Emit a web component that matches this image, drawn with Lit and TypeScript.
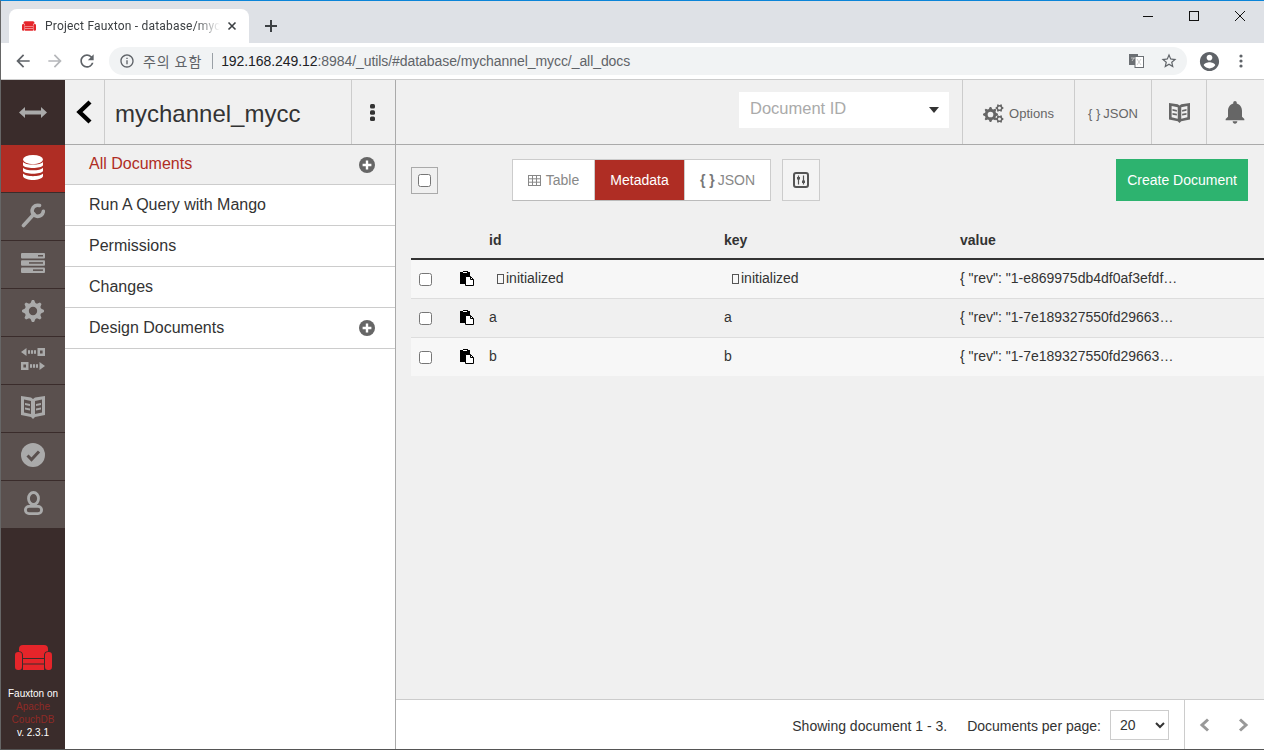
import { LitElement, html, css } from "lit";
import { customElement } from "lit/decorators.js";

const gear = (cx: number, cy: number, r: number, teeth: number) => {
  const pts: string[] = [];
  const n = teeth * 4;
  for (let i = 0; i < n; i++) {
    const a = ((i - 0.5) / n) * Math.PI * 2;
    const rad = i % 4 < 2 ? r : r * 0.76;
    pts.push(`${(cx + Math.cos(a) * rad).toFixed(2)} ${(cy + Math.sin(a) * rad).toFixed(2)}`);
  }
  const hole = r * 0.38;
  return `M${pts.join("L")}Z M${cx - hole} ${cy}a${hole} ${hole} 0 1 0 ${hole * 2} 0a${hole} ${hole} 0 1 0 ${-hole * 2} 0Z`;
};

const mat = (d: string, size: number, color = "#5f6368") =>
  html`<svg width=${size} height=${size} viewBox="0 0 24 24" fill=${color}><path d=${d}></path></svg>`;

const ARROW = "M20 11H7.83l5.59-5.59L12 4l-8 8 8 8 1.41-1.41L7.83 13H20v-2z";

const couch = (w: number, h: number, c = "#e5252a") => html`<svg width=${w} height=${h} viewBox="0 0 37 25">
  <path fill=${c} d="M8 0h21a4 4 0 0 1 4 4v2.2a4 4 0 0 0-4 3.8v3H8v-3a4 4 0 0 0-4-3.8V4a4 4 0 0 1 4-4z"></path>
  <rect fill=${c} x="0" y="7" width="7" height="18" rx="3.2"></rect>
  <rect fill=${c} x="30" y="7" width="7" height="18" rx="3.2"></rect>
  <rect fill=${c} x="8" y="14" width="21" height="4.5"></rect>
  <rect fill=${c} x="8" y="19.5" width="21" height="5.5"></rect>
</svg>`;

const book = (w: number, h: number, c: string) => html`<svg width=${w} height=${h} viewBox="0 0 24 24" fill=${c}>
  <path fill-rule="evenodd" d="M0 1l10 1.5L12 4l2-1.5L24 1v19l-10 2-2 2-2-2-10-2zM3 4.5v13l7 1.5V6zM21 4.5l-7 1.5v13l7-1.5z"></path>
  <path d="M4 8l5 1v2L4 10zM4 12.5l5 1v2l-5-1zM20 8l-5 1v2l5-1zM20 12.5l-5 1v2l5-1z"></path>
</svg>`;

const NAV_BG = "#5a504e";

const navIcons = [
  html`<svg width="20" height="25" viewBox="0 0 20 25" fill="#fff">
    <ellipse cx="10" cy="4.6" rx="10" ry="4.6"></ellipse>
    <path d="M0 7c2 3.4 18 3.4 20 0v3.2c-2 3.6-18 3.6-20 0z"></path>
    <path d="M0 12.8c2 3.4 18 3.4 20 0V16c-2 3.6-18 3.6-20 0z"></path>
    <path d="M0 18.6c2 3.4 18 3.4 20 0v2.6c-2 5-18 5-20 0z"></path>
  </svg>`,
  html`<svg width="24" height="25" viewBox="0 0 24 25" fill="none" stroke="#aaa" stroke-linecap="round">
    <path stroke-width="3.6" d="M2.5 22.5L13 11"></path>
    <path stroke-width="3.6" d="M18.5 2.5A5.6 5.6 0 1 0 22.3 8.4"></path>
  </svg>`,
  html`<svg width="24" height="20" viewBox="0 0 24 20">
    <rect width="24" height="5.6" rx="1" fill="#aaa"></rect>
    <rect y="7.2" width="24" height="5.6" rx="1" fill="#aaa"></rect>
    <rect y="14.4" width="24" height="5.6" rx="1" fill="#aaa"></rect>
    <rect x="17" y="2" width="5" height="1.5" fill=${NAV_BG}></rect>
    <rect x="8" y="9.2" width="14" height="1.5" fill=${NAV_BG}></rect>
    <rect x="12" y="16.4" width="10" height="1.5" fill=${NAV_BG}></rect>
  </svg>`,
  html`<svg width="22" height="22" viewBox="0 0 22 22" fill="#aaa"><path fill-rule="evenodd" d=${gear(11, 11, 11, 8)}></path></svg>`,
  html`<svg width="24" height="22" viewBox="0 0 24 22" fill="#aaa">
    <path d="M0 4l5.5-4v8z"></path>
    <rect x="7" y="2.2" width="2.1" height="3.6"></rect><rect x="10" y="2.2" width="2.1" height="3.6"></rect><rect x="13" y="2.2" width="2" height="3.6"></rect>
    <path fill-rule="evenodd" d="M16.5 0H24v8h-7.5zM19 2.6v2.8h2.6V2.6z"></path>
    <path d="M24 18l-5.5-4v8z"></path>
    <rect x="14.9" y="16.2" width="2.1" height="3.6"></rect><rect x="11.9" y="16.2" width="2.1" height="3.6"></rect><rect x="9" y="16.2" width="2" height="3.6"></rect>
    <path fill-rule="evenodd" d="M0 14h7.5v8H0zM2.4 16.6v2.8H5v-2.8z"></path>
  </svg>`,
  book(24, 24, "#aaa"),
  html`<svg width="24" height="24" viewBox="0 0 24 24">
    <circle cx="12" cy="12" r="12" fill="#aaa"></circle>
    <path d="M6.5 12.5l4 4 7.5-8" fill="none" stroke=${NAV_BG} stroke-width="3"></path>
  </svg>`,
  html`<svg width="19" height="24" viewBox="0 0 19 24" fill="none" stroke="#aaa" stroke-width="2.8">
    <ellipse cx="9.5" cy="7.5" rx="5" ry="6"></ellipse>
    <rect x="1.4" y="15.4" width="16.2" height="7.2" rx="3.6"></rect>
  </svg>`,
];

const navLabels = ["Databases", "Setup", "Active Tasks", "Configuration", "Replication", "Documentation", "Verify", "Admin"];

const plus = html`<svg class="plus" width="16" height="16" viewBox="0 0 16 16">
  <circle cx="8" cy="8" r="8" fill="#666"></circle>
  <path d="M8 3.6v8.8M3.6 8h8.8" stroke="#fff" stroke-width="2.4"></path>
</svg>`;

const copyIcon = html`<svg width="15" height="15" viewBox="0 0 15 15">
  <path d="M0 1h3V0h5v1h2v12H0z" fill="#000"></path>
  <rect x="3" y="1" width="4" height="1" fill="#fff"></rect>
  <path d="M5.5 5.5h5l3 3v6h-8z" fill="#fff" stroke="#000" stroke-width="1"></path>
  <path d="M10.5 5.5v3h3" fill="none" stroke="#000"></path>
</svg>`;

const rows = [
  { id: "initialized", tofu: true, value: '{ "rev": "1-e869975db4df0af3efdf6e02a4b1c7d3" }' },
  { id: "a", tofu: false, value: '{ "rev": "1-7e189327550fd29663bd7f0e2c41a8d6" }' },
  { id: "b", tofu: false, value: '{ "rev": "1-7e189327550fd29663bd7f0e2c41a8d6" }' },
];

@customElement("app-root")
export class AppRoot extends LitElement {
  static styles = css`
    :host {
      display: flex;
      flex-direction: column;
      width: 1264px;
      height: 750px;
      box-sizing: border-box;
      border-top: 1px solid #0a84d8;
      border-left: 1px solid #666;
      border-bottom: 1px solid #555;
      font-family: "Liberation Sans", Arial, sans-serif;
      color: #333;
      overflow: hidden;
      background: #fff;
    }
    * { box-sizing: border-box; }
    svg { display: block; flex: none; }

    .titlebar { height: 42px; background: #dee1e6; display: flex; flex: none; padding-left: 8px; }
    .tab {
      width: 240px; height: 34px; margin-top: 8px; background: #fff; border-radius: 8px 8px 0 0;
      display: flex; align-items: center; padding-left: 13px; position: relative;
    }
    .tab-title {
      margin-left: 9px; width: 175px; white-space: nowrap; overflow: hidden;
      font: 12px Roboto, sans-serif; letter-spacing: 0.2px; color: #3c4043;
      -webkit-mask-image: linear-gradient(to right, #000 150px, transparent 175px);
      mask-image: linear-gradient(to right, #000 150px, transparent 175px);
    }
    .tab-close { margin-left: 7px; }
    .newtab { margin: 18px 0 0 15px; }
    .winctl { margin-left: auto; display: flex; height: 30px; padding-right: 1px; }
    .winbtn { width: 46px; display: flex; align-items: center; justify-content: center; }

    .toolbar {
      height: 37px; flex: none; background: #fff; border-bottom: 1px solid #ccc;
      display: flex; align-items: flex-start; padding-top: 4px;
    }
    .nav-btn { width: 32px; height: 28px; display: flex; align-items: center; justify-content: center; }
    .back-btn { margin-left: 6px; }
    .flip { transform: scaleX(-1); }
    .omni {
      margin-left: 6px; width: 1078px; height: 28px; border-radius: 14px; background: #f1f3f4;
      display: flex; align-items: center; padding-left: 10px; white-space: nowrap;
    }
    .warn { margin-left: 8px; font: 14px "Noto Sans CJK KR", sans-serif; letter-spacing: 0.9px; color: #5f6368; line-height: 20px; }
    .sep { width: 1px; height: 16px; background: #9aa0a6; margin: 0 8px 0 10px; }
    .url { font-size: 14px; color: #5f6368; letter-spacing: -0.07px; }
    .url b { font-weight: 400; color: #202124; }
    .omni-right { margin-left: auto; display: flex; align-items: center; gap: 16px; padding-right: 9px; }
    .tool-right { display: flex; align-items: center; margin-left: 11px; height: 28px; gap: 18px; }

    .app { flex: 1; display: flex; min-height: 0; }
    .nav { width: 64px; flex: none; background: #3a2c2b; display: flex; flex-direction: column; }
    .nav-top { height: 65px; display: flex; align-items: center; justify-content: center; padding-bottom: 1px; }
    .nav-item {
      height: 48px; background: #5a504e; border-bottom: 1px solid #3a2c2b; padding-bottom: 3px;
      display: flex; align-items: center; justify-content: center;
    }
    .nav-item.active { background: #af2d24; }
    .nav-foot { margin-top: auto; display: flex; flex-direction: column; align-items: center; padding-bottom: 10px; }
    .foot-logo { margin-bottom: 17px; }
    .foot-line { font-size: 10px; line-height: 13px; color: #fff; white-space: nowrap; }
    .foot-line.red { color: #8f2a26; }

    .content { flex: 1; min-width: 0; display: flex; flex-direction: column; }
    .header { height: 65px; flex: none; background: #f0f0f0; border-bottom: 1px solid #aaa; display: flex; }
    .hd-left { width: 331px; flex: none; display: flex; border-right: 1px solid #aaa; }
    .hd-back { width: 40px; flex: none; border-right: 1px solid #ccc; display: flex; align-items: center; justify-content: center; padding-right: 2px; }
    .hd-title { flex: 1; padding-left: 10px; font-size: 24px; line-height: 68px; color: #333; white-space: nowrap; }
    .hd-menu { width: 44px; flex: none; border-left: 1px solid #ccc; display: flex; align-items: center; justify-content: center; padding-right: 2px; }
    .hd-right { flex: 1; display: flex; align-items: stretch; justify-content: flex-end; }
    .doc-box {
      width: 210px; height: 36px; margin: 12px 13px 0 0; background: #fff; display: flex; align-items: center; padding: 0 10px 0 0;
    }
    .doc-input {
      flex: 1; min-width: 0; height: 100%; border: 0; outline: 0; background: transparent; padding: 0 0 4px 11px;
      font: 16.5px "Liberation Sans", Arial, sans-serif;
    }
    .doc-input::placeholder { color: #aaa; opacity: 1; }
    .hd-btn {
      border-left: 1px solid #ccc; display: flex; align-items: center; justify-content: center;
      font-size: 13px; color: #666; gap: 5px; padding-top: 2px;
    }
    .w-opt { width: 112px; }
    .w-json { width: 77px; gap: 3px; }
    .w-book { width: 55px; padding-top: 0; }
    .w-bell { width: 58px; padding: 0 2px 0 0; }

    .body { flex: 1; min-height: 0; display: flex; }
    .side { width: 331px; flex: none; background: #fff; border-right: 1px solid #aaa; }
    .side-item {
      height: 41px; border-bottom: 1px solid #ccc; display: flex; align-items: center; justify-content: space-between;
      padding: 0 20px 1px 24px; font-size: 16px; color: #333;
    }
    .side-item.active { background: #f0f0f0; color: #af2d24; height: 40px; }
    .side-item.active .plus { margin-top: 2px; }

    .main { flex: 1; min-width: 0; display: flex; flex-direction: column; background: #f0f0f0; }
    .scroll { flex: 1; min-height: 0; padding: 14px 0 0 15px; }
    .controls { display: flex; align-items: flex-start; height: 42px; padding-right: 16px; }
    .check-all {
      width: 27px; height: 27px; margin-top: 8px; border: 1px solid #aaa;
      display: flex; align-items: center; justify-content: center;
    }
    input[type="checkbox"] { margin: 0; width: 13px; height: 13px; display: block; }
    .seg { margin-left: 74px; display: flex; height: 42px; border: 1px solid #ccc; border-bottom-color: #bbb; background: #fff; }
    .seg-btn { display: flex; align-items: center; justify-content: center; font-size: 14px; color: #888; gap: 5px; }
    .seg-table { width: 82px; border-right: 1px solid #ccc; }
    .seg-meta { width: 89px; background: #af2d24; color: #fff; }
    .seg-json { width: 86px; border-left: 1px solid #ccc; gap: 3px; }
    .seg-braces { font-weight: 700; color: #777; }
    .layout-btn {
      margin-left: 11px; width: 38px; height: 42px; border: 1px solid #ccc; background: #f4f4f4;
      display: flex; align-items: center; justify-content: center;
    }
    .create {
      margin-left: auto; width: 132px; height: 42px; background: #2db36f; color: #fff; font-size: 14px;
      display: flex; align-items: center; justify-content: center;
    }
    .table { margin-top: 21px; }
    .t-row { display: grid; grid-template-columns: 49px 29px 235px 236px 1fr; align-items: center; font-size: 14px; color: #333; }
    .t-head { height: 38px; border-bottom: 2px solid #333; font-weight: 700; padding-bottom: 1px; }
    .t-body { height: 39px; border-bottom: 1px solid #ddd; padding-bottom: 3px; background: #f0f0f0; }
    .t-body:nth-child(odd) { background: #f7f7f7; }
    .t-body:last-child { border-bottom: 0; height: 38px; }
    .t-check { padding-left: 8px; padding-top: 4px; }
    .t-copy { padding-top: 2px; }
    .t-value { width: 219px; overflow: hidden; text-overflow: ellipsis; white-space: nowrap; }
    .tofu {
      display: inline-block; width: 7px; height: 10px; border: 1px solid #555; margin: 0 2px 0 8px; vertical-align: -1px;
    }

    .footer {
      height: 50px; flex: none; background: #fff; border-top: 1px solid #ccc; display: flex; align-items: center;
      justify-content: flex-end; font-size: 14px; color: #333;
    }
    .foot-text { padding-top: 2px; }
    .per-page { margin-left: 20px; }
    .per-select {
      margin-left: 9px; width: 59px; height: 30px; background: #fff; border: 1px solid #ccc; border-radius: 0;
      font: 14px "Liberation Sans", Arial, sans-serif; color: #333; padding-left: 5px; outline: 0;
    }
    .pager {
      width: 80px; height: 100%; margin-left: 15px; border-left: 1px solid #ccc; display: flex; align-items: center;
      justify-content: space-between; padding: 0 15px 0 14px;
    }
  `;

  render() {
    return html`
      <div class="titlebar">
        <div class="tab">
          ${couch(14, 10)}
          <div class="tab-title">Project Fauxton - database/mychannel_mycc</div>
          <svg class="tab-close" width="10" height="10" viewBox="0 0 10 10"><path d="M1.5 1.5l7 7M8.5 1.5l-7 7" stroke="#3c4043" stroke-width="1.6"></path></svg>
        </div>
        <svg class="newtab" width="14" height="14" viewBox="0 0 14 14"><path d="M7 1v12M1 7h12" stroke="#3c4043" stroke-width="2"></path></svg>
        <div class="winctl">
          <div class="winbtn"><svg width="10" height="10" viewBox="0 0 10 10"><path d="M0 5.5h10" stroke="#111"></path></svg></div>
          <div class="winbtn"><svg width="10" height="10" viewBox="0 0 10 10"><rect x=".5" y=".5" width="9" height="9" fill="none" stroke="#111"></rect></svg></div>
          <div class="winbtn"><svg width="10" height="10" viewBox="0 0 10 10"><path d="M0 0l10 10M10 0L0 10" stroke="#111"></path></svg></div>
        </div>
      </div>

      <div class="toolbar">
        <div class="nav-btn back-btn">${mat(ARROW, 20)}</div>
        <div class="nav-btn flip">${mat(ARROW, 20, "#b5b7ba")}</div>
        <div class="nav-btn">${mat("M17.65 6.35A7.958 7.958 0 0 0 12 4c-4.42 0-7.99 3.58-7.99 8s3.57 8 7.99 8c3.73 0 6.84-2.55 7.73-6h-2.08A5.99 5.99 0 0 1 12 18c-3.31 0-6-2.69-6-6s2.69-6 6-6c1.66 0 3.14.69 4.22 1.78L13 11h7V4l-2.35 2.35z", 20)}</div>
        <div class="omni">
          ${mat("M11 7h2v2h-2zm0 4h2v6h-2zm1-9C6.48 2 2 6.48 2 12s4.48 10 10 10 10-4.48 10-10S17.52 2 12 2zm0 18c-4.41 0-8-3.59-8-8s3.59-8 8-8 8 3.59 8 8-3.59 8-8 8z", 16)}
          <span class="warn">주의 요함</span><span class="sep"></span>
          <span class="url"><b>192.168.249.12</b>:8984/_utils/#database/mychannel_mycc/_all_docs</span>
          <div class="omni-right">
            <svg width="15" height="14" viewBox="0 0 15 14">
              <rect x="0" y="0" width="9" height="11" fill="#6b6f73"></rect>
              <rect x="6" y="2.5" width="8.5" height="11" fill="#fff" stroke="#6b6f73"></rect>
              <path d="M2 4h4M3 7l2-3M8 5l4 6M12 5l-4 6" stroke="#ccc" stroke-width=".9" fill="none"></path>
            </svg>
            ${mat("M22 9.24l-7.19-.62L12 2 9.19 8.63 2 9.24l5.46 4.73L5.82 21 12 17.27 18.18 21l-1.63-7.03L22 9.24zM12 15.4l-3.76 2.27 1-4.28-3.32-2.88 4.38-.38L12 6.1l1.71 4.04 4.38.38-3.32 2.88 1 4.28L12 15.4z", 18)}
          </div>
        </div>
        <div class="tool-right">
          ${mat("M12 2C6.48 2 2 6.48 2 12s4.48 10 10 10 10-4.48 10-10S17.52 2 12 2zm0 3c1.66 0 3 1.34 3 3s-1.34 3-3 3-3-1.34-3-3 1.34-3 3-3zm0 14.2c-2.5 0-4.71-1.28-6-3.22.03-1.99 4-3.08 6-3.08 1.99 0 5.97 1.09 6 3.08-1.29 1.94-3.5 3.22-6 3.22z", 23)}
          <svg width="4" height="14" viewBox="0 0 4 14" fill="#5f6368"><circle cx="2" cy="2" r="1.6"></circle><circle cx="2" cy="7" r="1.6"></circle><circle cx="2" cy="12" r="1.6"></circle></svg>
        </div>
      </div>

      <div class="app">
        <nav class="nav">
          <div class="nav-top">
            <svg width="28" height="11" viewBox="0 0 28 11" fill="#aaa"><path d="M0 5.5L6 0v3.5h16V0l6 5.5-6 5.5V7.5H6V11z"></path></svg>
          </div>
          ${navIcons.map((ic, i) => html`<div class="nav-item ${i === 0 ? "active" : ""}" title=${navLabels[i]}>${ic}</div>`)}
          <div class="nav-foot">
            <div class="foot-logo">${couch(37, 25)}</div>
            <div class="foot-line">Fauxton on</div>
            <div class="foot-line red">Apache</div>
            <div class="foot-line red">CouchDB</div>
            <div class="foot-line">v. 2.3.1</div>
          </div>
        </nav>

        <div class="content">
          <header class="header">
            <div class="hd-left">
              <div class="hd-back"><svg width="16" height="24" viewBox="0 0 16 24"><path d="M14 2L3.5 12 14 22" fill="none" stroke="#000" stroke-width="4.4"></path></svg></div>
              <div class="hd-title">mychannel_mycc</div>
              <div class="hd-menu"><svg width="5" height="17" viewBox="0 0 5 17" fill="#333"><rect width="5" height="4.4" rx="1.5"></rect><rect y="6.3" width="5" height="4.4" rx="1.5"></rect><rect y="12.6" width="5" height="4.4" rx="1.5"></rect></svg></div>
            </div>
            <div class="hd-right">
              <div class="doc-box">
                <input class="doc-input" placeholder="Document ID" />
                <svg width="10" height="6" viewBox="0 0 10 6" fill="#333"><path d="M0 0h10L5 6z"></path></svg>
              </div>
              <div class="hd-btn w-opt">
                <svg width="21" height="19" viewBox="0 0 21 19" fill="#666">
                  <path fill-rule="evenodd" d=${gear(7.5, 10.5, 7.5, 8)}></path>
                  <path fill-rule="evenodd" d=${gear(16.5, 4, 4, 6)}></path>
                  <path fill-rule="evenodd" d=${gear(16.5, 15, 4, 6)}></path>
                </svg>
                <span>Options</span>
              </div>
              <div class="hd-btn w-json"><span>{ }</span><span>JSON</span></div>
              <div class="hd-btn w-book">${book(21, 21, "#666")}</div>
              <div class="hd-btn w-bell">${mat("M12 22c1.1 0 2-.9 2-2h-4c0 1.1.9 2 2 2zm6-6v-5c0-3.07-1.63-5.64-4.5-6.32V4c0-.83-.67-1.5-1.5-1.5s-1.5.67-1.5 1.5v.68C7.64 5.36 6 7.92 6 11v5l-2 2v1h16v-1l-2-2z", 28, "#666")}</div>
            </div>
          </header>

          <div class="body">
            <aside class="side">
              <div class="side-item active"><span>All Documents</span>${plus}</div>
              <div class="side-item"><span>Run A Query with Mango</span></div>
              <div class="side-item"><span>Permissions</span></div>
              <div class="side-item"><span>Changes</span></div>
              <div class="side-item"><span>Design Documents</span>${plus}</div>
            </aside>

            <main class="main">
              <div class="scroll">
                <div class="controls">
                  <div class="check-all"><input type="checkbox" /></div>
                  <div class="seg">
                    <div class="seg-btn seg-table">
                      <svg width="13" height="11" viewBox="0 0 13 11" fill="none" stroke="#888"><rect x=".5" y=".5" width="12" height="10"></rect><path d="M.5 3.8h12M.5 7.2h12M4.5.5v10M8.5.5v10"></path></svg>
                      <span>Table</span>
                    </div>
                    <div class="seg-btn seg-meta">Metadata</div>
                    <div class="seg-btn seg-json"><span class="seg-braces">{ }</span><span>JSON</span></div>
                  </div>
                  <div class="layout-btn">
                    <svg width="16" height="16" viewBox="0 0 16 16" fill="none" stroke="#555">
                      <rect x="1" y="1" width="14" height="14" rx="2" stroke-width="2"></rect>
                      <path d="M5.5 3.5v9M10.5 3.5v9" stroke-width="1.2"></path>
                      <rect x="4" y="5" width="3" height="2.5" fill="#555" stroke="none"></rect>
                      <rect x="9" y="8.5" width="3" height="2.5" fill="#555" stroke="none"></rect>
                    </svg>
                  </div>
                  <div class="create">Create Document</div>
                </div>

                <div class="table">
                  <div class="t-row t-head"><span></span><span></span><span>id</span><span>key</span><span>value</span></div>
                  <div>
                    ${rows.map((r) => html`
                      <div class="t-row t-body">
                        <div class="t-check"><input type="checkbox" /></div>
                        <div class="t-copy">${copyIcon}</div>
                        <span>${r.tofu ? html`<i class="tofu"></i>` : ""}${r.id}</span>
                        <span>${r.tofu ? html`<i class="tofu"></i>` : ""}${r.id}</span>
                        <span class="t-value">${r.value}</span>
                      </div>`)}
                  </div>
                </div>
              </div>
              <footer class="footer">
                <span class="foot-text">Showing document 1 - 3.</span>
                <span class="per-page foot-text">Documents per page:</span>
                <select class="per-select"><option>20</option><option>30</option><option>50</option></select>
                <div class="pager">
                  <svg width="11" height="14" viewBox="0 0 11 14"><path d="M9 1.5L3 7l6 5.5" fill="none" stroke="#999" stroke-width="3"></path></svg>
                  <svg width="11" height="14" viewBox="0 0 11 14"><path d="M2 1.5L8 7l-6 5.5" fill="none" stroke="#999" stroke-width="3"></path></svg>
                </div>
              </footer>
            </main>
          </div>
        </div>
      </div>
    `;
  }
}
